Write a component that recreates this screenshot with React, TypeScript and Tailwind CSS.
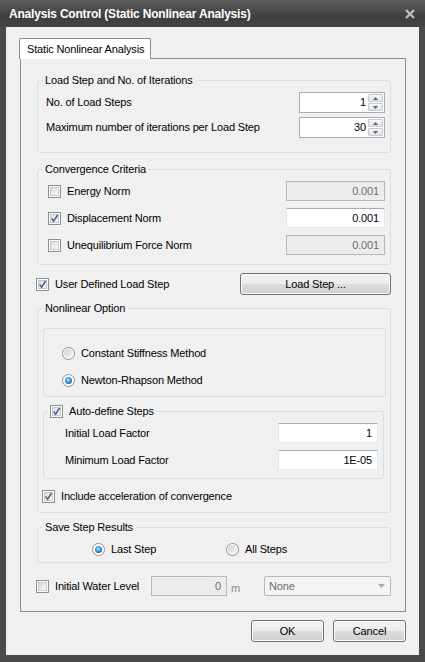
import type { ReactNode } from "react";

function CheckBox({ checked = false }: { checked?: boolean }) {
  return (
    <span className="relative flex h-[13px] w-[13px] shrink-0 items-center justify-center border border-[#8e8f8f] bg-white">
      <span className="h-[9px] w-[9px] border border-[#c4c7cb] bg-[linear-gradient(135deg,#d9dbde,#fbfbfb)]" />
      {checked && (
        <svg className="absolute left-0 top-0" width="11" height="11" viewBox="0 0 11 11">
          <path d="M2.6 5.4 L4.6 8.2 L8.6 2" stroke="#45598a" strokeWidth="1.4" fill="none" />
        </svg>
      )}
    </span>
  );
}

function Radio({ checked = false }: { checked?: boolean }) {
  return (
    <span className="flex h-[13px] w-[13px] shrink-0 items-center justify-center rounded-full border border-[#8e8f8f] bg-white">
      {checked ? (
        <span className="h-[7px] w-[7px] rounded-full bg-[radial-gradient(circle_at_45%_40%,#b5ecff_0%,#3596d8_45%,#0e3a6a_100%)]" />
      ) : (
        <span className="h-[9px] w-[9px] rounded-full bg-[linear-gradient(135deg,#cdd0d4,#f8f8f8)]" />
      )}
    </span>
  );
}

function Group({
  title,
  className = "",
  titleClassName = "ml-[4px] px-[3px]",
  children,
}: {
  title: ReactNode;
  className?: string;
  titleClassName?: string;
  children: ReactNode;
}) {
  return (
    <div className={`rounded-[3px] border border-[#d5dfe5] ${className}`}>
      <div className={`-mt-[8px] flex h-[15px] w-fit items-center gap-[6px] bg-[#f0f0f0] ${titleClassName}`}>
        {title}
      </div>
      {children}
    </div>
  );
}

function Field({ value, className, disabled = false }: { value: string; className: string; disabled?: boolean }) {
  return (
    <div
      className={
        disabled
          ? `flex items-center justify-end border border-[#b5b8bc] bg-[#ececec] pr-[5px] text-[#6d6d6d] ${className}`
          : `flex items-center justify-end border border-[#e3e9ef] border-t-[#abadb3] bg-white pr-[5px] ${className}`
      }
    >
      {value}
    </div>
  );
}

function Tri({ up }: { up?: boolean }) {
  return (
    <svg width="5" height="3" viewBox="0 0 5 3">
      <path d={up ? "M0 3 L2.5 0 L5 3 Z" : "M0 0 L2.5 3 L5 0 Z"} fill="#4d6185" />
    </svg>
  );
}

function SpinBox({ value }: { value: string }) {
  return (
    <div className="flex h-[21px] w-[86px] items-center border border-[#abadb3] bg-white">
      <span className="flex-1 pr-[2px] text-right">{value}</span>
      <div className="flex h-full w-[16px] flex-col gap-px py-px pr-px">
        <span className="flex flex-1 items-center justify-center rounded-[1px] border border-[#c5c8cc] bg-[linear-gradient(#f6f6f6,#dfe1e4)]">
          <Tri up />
        </span>
        <span className="flex flex-1 items-center justify-center rounded-[1px] border border-[#c5c8cc] bg-[linear-gradient(#f6f6f6,#dfe1e4)]">
          <Tri />
        </span>
      </div>
    </div>
  );
}

function Button({ label, className }: { label: string; className: string }) {
  return (
    <div
      className={`flex h-[22px] items-center justify-center rounded-[3px] border border-[#707070] bg-[linear-gradient(to_bottom,#f2f2f2_0%,#ebebeb_50%,#dddddd_50%,#cfcfcf_100%)] shadow-[inset_0_0_0_1px_#fbfbfb] ${className}`}
    >
      {label}
    </div>
  );
}

export default function App() {
  return (
    <div className="flex h-[662px] w-[425px] flex-col bg-[#4a4a4a] font-['Liberation_Sans',Arial,sans-serif] text-[11px] tracking-[-0.15px] text-black">
      <div className="flex h-[27px] shrink-0 items-center justify-between bg-[linear-gradient(#5d5d5d,#3f3f3f_60%,#434343)] pl-[9px] pr-[10px]">
        <span className="text-[12px] font-bold tracking-[-0.2px] text-white">
          Analysis Control (Static Nonlinear Analysis)
        </span>
        <svg width="10" height="10" viewBox="0 0 10 10">
          <path d="M1 1 L9 9 M9 1 L1 9" stroke="#bdbdbd" strokeWidth="2.4" />
        </svg>
      </div>

      <div className="mx-[6px] h-[628px] shrink-0 bg-[#f0f0f0] pl-[14px] pt-[11px]">
        <div className="flex h-[20px]">
          <div className="relative z-10 -ml-px flex h-[21px] w-[132px] items-center rounded-t-[2px] border border-b-0 border-[#898c95] bg-white pl-[7px]">
            Static Nonlinear Analysis
          </div>
        </div>

        <div className="flex h-[554px] w-[386px] flex-col border border-[#898c95] bg-[#f0f0f0] pl-[16px]">
          <Group title="Load Step and No. of Iterations" className="mt-[21px] w-[354px] pb-[14px]">
            <div className="mt-[4px] flex flex-col gap-[4px] pl-[8px] pr-[5px]">
              <div className="flex h-[21px] items-center justify-between">
                <span>No. of Load Steps</span>
                <SpinBox value="1" />
              </div>
              <div className="flex h-[21px] items-center justify-between">
                <span>Maximum number of iterations per Load Step</span>
                <SpinBox value="30" />
              </div>
            </div>
          </Group>

          <Group title="Convergence Criteria" className="mt-[16px] w-[354px] pb-[9px]">
            <div className="mt-[4px] flex flex-col gap-[7px] pl-[10px] pr-[5px]">
              <div className="flex h-[20px] items-center justify-between">
                <span className="flex items-center gap-[6px]">
                  <CheckBox />
                  Energy Norm
                </span>
                <Field value="0.001" className="h-[20px] w-[99px]" disabled />
              </div>
              <div className="flex h-[20px] items-center justify-between">
                <span className="flex items-center gap-[6px]">
                  <CheckBox checked />
                  Displacement Norm
                </span>
                <Field value="0.001" className="h-[20px] w-[99px]" />
              </div>
              <div className="flex h-[20px] items-center justify-between">
                <span className="flex items-center gap-[6px]">
                  <CheckBox />
                  Unequilibrium Force Norm
                </span>
                <Field value="0.001" className="h-[20px] w-[99px]" disabled />
              </div>
            </div>
          </Group>

          <div className="-ml-px mt-[8px] flex h-[22px] items-center">
            <span className="flex w-[204px] items-center gap-[6px]">
              <CheckBox checked />
              User Defined Load Step
            </span>
            <Button label="Load Step ..." className="w-[151px]" />
          </div>

          <Group title="Nonlinear Option" className="mt-[13px] w-[354px] pb-[8px]">
            <div className="ml-[5px] mr-[4px] mt-[12px] flex flex-col gap-[7px] rounded-[3px] border border-[#d5dfe5] pb-[6px] pl-[18px] pt-[14px]">
              <span className="flex h-[20px] items-center gap-[6px]">
                <Radio />
                Constant Stiffness Method
              </span>
              <span className="flex h-[20px] items-center gap-[6px]">
                <Radio checked />
                Newton-Rhapson Method
              </span>
            </div>

            <Group
              title={
                <>
                  <CheckBox checked />
                  Auto-define Steps
                </>
              }
              titleClassName="ml-[4px] px-[2px]"
              className="ml-[5px] mr-[6px] mt-[14px] pb-[8px]"
            >
              <div className="mt-[4px] flex flex-col gap-[7px] pl-[21px] pr-[5px]">
                <div className="flex h-[20px] items-center justify-between">
                  <span>Initial Load Factor</span>
                  <Field value="1" className="h-[20px] w-[100px]" />
                </div>
                <div className="flex h-[20px] items-center justify-between">
                  <span>Minimum Load Factor</span>
                  <Field value="1E-05" className="h-[20px] w-[100px]" />
                </div>
              </div>
            </Group>

            <span className="ml-[4px] mt-[9px] flex h-[16px] items-center gap-[6px]">
              <CheckBox checked />
              Include acceleration of convergence
            </span>
          </Group>

          <Group title="Save Step Results" className="mt-[14px] w-[354px] pb-[5px]">
            <div className="mt-[6px] flex h-[16px] items-center pl-[54px]">
              <span className="flex w-[134px] items-center gap-[6px]">
                <Radio checked />
                Last Step
              </span>
              <span className="flex items-center gap-[6px]">
                <Radio />
                All Steps
              </span>
            </div>
          </Group>

          <div className="-ml-px mt-[13px] flex h-[20px] items-center">
            <span className="flex w-[115px] items-center gap-[6px]">
              <CheckBox />
              Initial Water Level
            </span>
            <Field value="0" className="h-[20px] w-[76px]" disabled />
            <span className="w-[37px] pl-[4px] pt-[4px] text-[#8a8a8a]">m</span>
            <div className="flex h-[20px] w-[127px] items-center justify-between rounded-[2px] border border-[#b5b8bc] bg-[#f4f4f4] pl-[4px] pr-[5px] text-[#6d6d6d]">
              None
              <svg width="7" height="4" viewBox="0 0 7 4">
                <path d="M0 0 L3.5 4 L7 0 Z" fill="#a9a9a9" />
              </svg>
            </div>
          </div>
        </div>

        <div className="mt-[8px] flex w-[386px] justify-end gap-[9px]">
          <Button label="OK" className="w-[73px]" />
          <Button label="Cancel" className="w-[73px]" />
        </div>
      </div>
    </div>
  );
}
